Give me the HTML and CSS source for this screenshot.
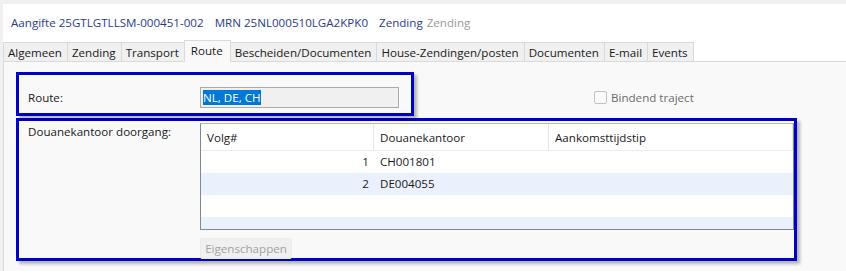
FILE: index.html
```html
<!DOCTYPE html>
<html lang="nl">
<head>
    <meta charset="UTF-8">
    <title>Aangifte - Route</title>
    <link rel="stylesheet" href="styles.css">
</head>
<body>
    <div class="window">
        <!-- Header -->
        <div class="header">
            <span class="hdr-item">Aangifte 25GTLGTLLSM-000451-002</span>
            <span class="hdr-item">MRN 25NL000510LGA2KPK0</span>
            <span class="hdr-item">Zending <span class="muted">Zending</span></span>
        </div>

        <!-- Tabs -->
        <div class="tabs">
            <div class="tab">Algemeen</div>
            <div class="tab">Zending</div>
            <div class="tab">Transport</div>
            <div class="tab active">Route</div>
            <div class="tab">Bescheiden/Documenten</div>
            <div class="tab">House-Zendingen/posten</div>
            <div class="tab">Documenten</div>
            <div class="tab">E-mail</div>
            <div class="tab">Events</div>
        </div>

        <!-- Route page -->
        <div class="content">
            <div class="route-row">
                <div class="box box-route">
                    <label class="field-label">Route:</label>
                    <div class="field-input"><span class="selected">NL, DE, CH</span></div>
                </div>
                <label class="check">
                    <span class="check-box"></span>
                    Bindend traject
                </label>
            </div>

            <div class="box box-offices">
                <div class="field-label offices-label">Douanekantoor doorgang:</div>
                <div class="offices">
                    <div class="grid">
                        <div class="grid-head">
                            <div class="col col-nr">Volg#</div>
                            <div class="col col-office">Douanekantoor</div>
                            <div class="col col-time">Aankomsttijdstip</div>
                        </div>
                        <div class="grid-body">
                            <div class="grid-row">
                                <div class="col col-nr num">1</div>
                                <div class="col col-office">CH001801</div>
                                <div class="col col-time"></div>
                            </div>
                            <div class="grid-row alt">
                                <div class="col col-nr num">2</div>
                                <div class="col col-office">DE004055</div>
                                <div class="col col-time"></div>
                            </div>
                            <div class="grid-row"></div>
                            <div class="grid-row alt"></div>
                        </div>
                    </div>
                    <button class="btn" disabled>Eigenschappen</button>
                </div>
            </div>
        </div>
    </div>
</body>
</html>
```

FILE: styles.css
```css
/* Basic styling */
body {
    margin: 0;
    background-color: #f0f0f0;
    font-family: "Open Sans", "Noto Sans", sans-serif;
    font-size: 11.6px;
    color: #1a1a1a;
}
.window {
    margin: 4px 0 0 3px;
    background-color: #fff;
    height: 267px;
    display: flex;
    flex-direction: column;
}
/* Header */
.header {
    height: 36px;
    display: flex;
    align-items: center;
    padding-left: 8px;
    gap: 11px;
    color: #1f3c92;
}
.muted {
    color: #9a9a9a;
    margin-left: 1px;
}
/* Tabs */
.tabs {
    display: flex;
    align-items: flex-end;
    height: 21px;
    border-bottom: 1px solid #dadada;
}
.tab {
    height: 19px;
    box-sizing: border-box;
    padding: 1px 5px 0 4px;
    background-color: #f0f0f0;
    border: 1px solid #dadada;
    border-bottom: none;
    margin-right: -1px;
    line-height: 17px;
}
.tab.active {
    height: 22px;
    margin-bottom: -1px;
    background-color: #f9f9f9;
    padding: 0 7px 0 6px;
    line-height: 19px;
    position: relative;
}
/* Content */
.content {
    flex: 1;
    background-color: #f9f9f9;
    border-left: 1px solid #dadada;
    padding: 10px 0 0 12px;
}
.box {
    box-sizing: border-box;
    border: 3px solid #0000c8;
    box-shadow: 3px 3px 3px rgba(0, 0, 0, 0.28);
}
.route-row {
    display: flex;
    align-items: center;
}
.box-route {
    width: 398px;
    height: 44px;
    display: flex;
    align-items: center;
    padding: 6px 0 0 9px;
}
.field-label {
    width: 172px;
    flex-shrink: 0;
}
.field-input {
    width: 199px;
    height: 21px;
    box-sizing: border-box;
    border: 1px solid #ababab;
    background-color: #f0f0f0;
    padding: 1px 0 0 2px;
    line-height: 17px;
}
.selected {
    background-color: #0078d7;
    color: #fff;
}
.check {
    display: flex;
    align-items: center;
    gap: 4px;
    margin: 7px 0 0 180px;
    color: #6d6d6d;
}
.check-box {
    width: 11px;
    height: 11px;
    border: 1px solid #c2c2c2;
    border-radius: 2px;
    background-color: #fafafa;
}
/* Offices box */
.box-offices {
    width: 781px;
    height: 143px;
    margin-top: 2px;
    display: flex;
    padding: 2px 0 0 9px;
}
.offices-label {
    padding-top: 1px;
}
.offices {
    flex: 1;
}
.grid {
    border: 1px solid #828790;
    border-top-color: #b9b9b9;
    background-color: #fff;
}
.grid-head {
    display: flex;
    height: 26px;
    border-bottom: 1px solid #ececec;
    line-height: 27px;
}
.grid-head .col {
    border-right: 1px solid #e6e6e6;
}
.col {
    box-sizing: border-box;
    padding: 0 6px;
}
.col-nr {
    width: 173px;
}
.col-office {
    width: 175px;
}
.col-time {
    width: 244px;
}
.grid-body {
    height: 78px;
    overflow: hidden;
}
.grid-row {
    display: flex;
    height: 22px;
    line-height: 22px;
}
.grid-row.alt {
    background-color: #eaf1fc;
}
.num {
    text-align: right;
    padding-right: 5px;
}
.btn {
    margin-top: 8px;
    width: 92px;
    height: 21px;
    font-family: inherit;
    font-size: 11.6px;
    color: #a2a2a2;
    background-color: #f0f0f0;
    border: 1px solid #ececec;
    border-radius: 2px;
    padding: 0;
}
```
